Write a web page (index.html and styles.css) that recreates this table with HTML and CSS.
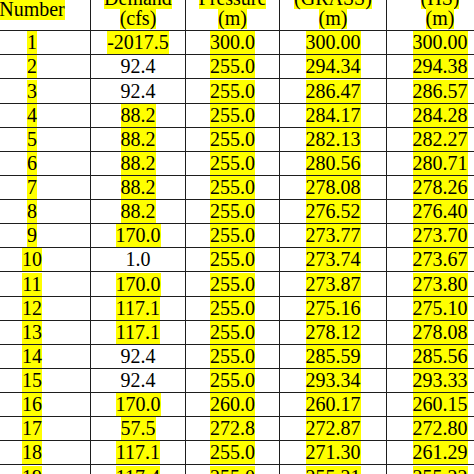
FILE: index.html
```html
<!DOCTYPE html>
<html>
<head>
<meta charset="utf-8">
<link rel="stylesheet" href="styles.css">
</head>
<body>
<div class="viewport">
  <div class="grid">
    <div class="cell head mid"><div><span class="hl">Node</span></div><div><span class="hl">Number</span></div></div>
    <div class="cell head"><div><span class="hl">Demand</span></div><div><span class="hl">(cfs)</span></div></div>
    <div class="cell head"><div><span class="hl">Pressure</span></div><div><span class="hl">(m)</span></div></div>
    <div class="cell head"><div><span class="hl">(GRASS)</span></div><div><span class="hl">(m)</span></div></div>
    <div class="cell head"><div><span class="hl">(HS)</span></div><div><span class="hl">(m)</span></div></div>

    <div class="cell"><span class="hl">1</span></div><div class="cell"><span class="hl">-2017.5</span></div><div class="cell"><span class="hl">300.0</span></div><div class="cell"><span class="hl">300.00</span></div><div class="cell"><span class="hl">300.00</span></div>
    <div class="cell"><span class="hl">2</span></div><div class="cell"><span>92.4</span></div><div class="cell"><span class="hl">255.0</span></div><div class="cell"><span class="hl">294.34</span></div><div class="cell"><span class="hl">294.38</span></div>
    <div class="cell"><span class="hl">3</span></div><div class="cell"><span>92.4</span></div><div class="cell"><span class="hl">255.0</span></div><div class="cell"><span class="hl">286.47</span></div><div class="cell"><span class="hl">286.57</span></div>
    <div class="cell"><span class="hl">4</span></div><div class="cell"><span class="hl">88.2</span></div><div class="cell"><span class="hl">255.0</span></div><div class="cell"><span class="hl">284.17</span></div><div class="cell"><span class="hl">284.28</span></div>
    <div class="cell"><span class="hl">5</span></div><div class="cell"><span class="hl">88.2</span></div><div class="cell"><span class="hl">255.0</span></div><div class="cell"><span class="hl">282.13</span></div><div class="cell"><span class="hl">282.27</span></div>
    <div class="cell"><span class="hl">6</span></div><div class="cell"><span class="hl">88.2</span></div><div class="cell"><span class="hl">255.0</span></div><div class="cell"><span class="hl">280.56</span></div><div class="cell"><span class="hl">280.71</span></div>
    <div class="cell"><span class="hl">7</span></div><div class="cell"><span class="hl">88.2</span></div><div class="cell"><span class="hl">255.0</span></div><div class="cell"><span class="hl">278.08</span></div><div class="cell"><span class="hl">278.26</span></div>
    <div class="cell"><span class="hl">8</span></div><div class="cell"><span class="hl">88.2</span></div><div class="cell"><span class="hl">255.0</span></div><div class="cell"><span class="hl">276.52</span></div><div class="cell"><span class="hl">276.40</span></div>
    <div class="cell"><span class="hl">9</span></div><div class="cell"><span class="hl">170.0</span></div><div class="cell"><span class="hl">255.0</span></div><div class="cell"><span class="hl">273.77</span></div><div class="cell"><span class="hl">273.70</span></div>
    <div class="cell"><span class="hl">10</span></div><div class="cell"><span>1.0</span></div><div class="cell"><span class="hl">255.0</span></div><div class="cell"><span class="hl">273.74</span></div><div class="cell"><span class="hl">273.67</span></div>
    <div class="cell"><span class="hl">11</span></div><div class="cell"><span class="hl">170.0</span></div><div class="cell"><span class="hl">255.0</span></div><div class="cell"><span class="hl">273.87</span></div><div class="cell"><span class="hl">273.80</span></div>
    <div class="cell"><span class="hl">12</span></div><div class="cell"><span class="hl">117.1</span></div><div class="cell"><span class="hl">255.0</span></div><div class="cell"><span class="hl">275.16</span></div><div class="cell"><span class="hl">275.10</span></div>
    <div class="cell"><span class="hl">13</span></div><div class="cell"><span class="hl">117.1</span></div><div class="cell"><span class="hl">255.0</span></div><div class="cell"><span class="hl">278.12</span></div><div class="cell"><span class="hl">278.08</span></div>
    <div class="cell"><span class="hl">14</span></div><div class="cell"><span>92.4</span></div><div class="cell"><span class="hl">255.0</span></div><div class="cell"><span class="hl">285.59</span></div><div class="cell"><span class="hl">285.56</span></div>
    <div class="cell"><span class="hl">15</span></div><div class="cell"><span>92.4</span></div><div class="cell"><span class="hl">255.0</span></div><div class="cell"><span class="hl">293.34</span></div><div class="cell"><span class="hl">293.33</span></div>
    <div class="cell"><span class="hl">16</span></div><div class="cell"><span class="hl">170.0</span></div><div class="cell"><span class="hl">260.0</span></div><div class="cell"><span class="hl">260.17</span></div><div class="cell"><span class="hl">260.15</span></div>
    <div class="cell"><span class="hl">17</span></div><div class="cell"><span class="hl">57.5</span></div><div class="cell"><span class="hl">272.8</span></div><div class="cell"><span class="hl">272.87</span></div><div class="cell"><span class="hl">272.80</span></div>
    <div class="cell"><span class="hl">18</span></div><div class="cell"><span class="hl">117.1</span></div><div class="cell"><span class="hl">255.0</span></div><div class="cell"><span class="hl">271.30</span></div><div class="cell"><span class="hl">261.29</span></div>
    <div class="cell"><span class="hl">19</span></div><div class="cell"><span class="hl">117.4</span></div><div class="cell"><span class="hl">255.0</span></div><div class="cell"><span class="hl">255.21</span></div><div class="cell"><span class="hl">255.22</span></div>
  </div>
</div>
</body>
</html>
```
FILE: styles.css
```css
html, body {
  margin: 0;
  padding: 0;
  background: #ffffff;
}

.viewport {
  width: 474px;
  height: 474px;
  overflow: hidden;
}

.grid {
  display: grid;
  grid-template-columns: 117px 95px 94px 107px 107px;
  grid-template-rows: 64px;
  grid-auto-rows: 24.14px;
  margin-left: -26px;
  margin-top: -32.8px;
  font-family: "Liberation Serif", "Times New Roman", serif;
  font-size: 20px;
  color: #000;
}

.cell {
  box-sizing: border-box;
  border-right: 1px solid #1e1e1e;
  border-bottom: 1px solid #1e1e1e;
  display: flex;
  align-items: center;
  justify-content: center;
  line-height: 23px;
  white-space: nowrap;
}

.head {
  flex-direction: column;
  justify-content: flex-end;
  align-items: center;
  padding: 2px 0;
  line-height: 20px;
}

.head.mid {
  justify-content: center;
}

.hl {
  background: #ffff00;
}
```
